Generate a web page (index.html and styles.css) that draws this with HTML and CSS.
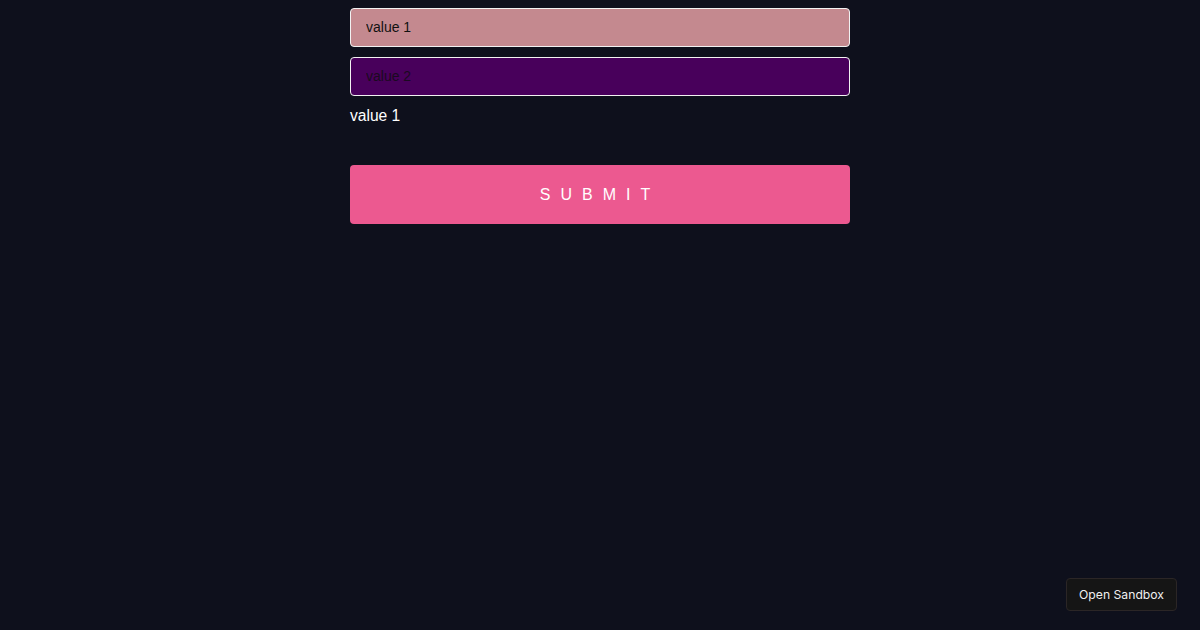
FILE: index.html
```html
<!DOCTYPE html>
<html>
<head>
<meta charset="utf-8">
<link rel="stylesheet" href="styles.css">
</head>
<body>
<form class="form">
  <input class="field field-one" value="value 1">
  <input class="field field-two" value="value 2">
  <p class="output">value 1</p>
  <button type="button" class="submit">submit</button>
</form>
<a class="sandbox">Open Sandbox</a>
</body>
</html>
```
FILE: styles.css
```css
html, body {
  margin: 0;
  background: #0e101c;
  height: 100%;
}
body {
  font-family: "Liberation Sans", Arial, sans-serif;
  padding-top: 8px;
  box-sizing: border-box;
}
.form {
  width: 500px;
  margin: 0 auto;
  display: flex;
  flex-direction: column;
}
.field {
  display: block;
  box-sizing: border-box;
  width: 100%;
  height: 39px;
  border-radius: 4px;
  border: 1px solid #f2f2f2;
  padding: 9px 15px 11px;
  margin: 0 0 10px 0;
  font-family: "Liberation Sans", Arial, sans-serif;
  font-size: 14px;
  color: #111;
  outline: none;
}
.field-one { background: #c4898f; }
.field-two { background: #48005b; color: #1a0a20; }
.output {
  margin: 0;
  padding-top: 1px;
  color: #fff;
  font-size: 15.6px;
  line-height: 18px;
  height: 18px;
}
.submit {
  margin-top: 40px;
  height: 59px;
  background: #ec5990;
  color: #fff;
  border: none;
  border-radius: 4px;
  text-transform: uppercase;
  font-family: "Liberation Sans", Arial, sans-serif;
  font-size: 16px;
  font-weight: 100;
  letter-spacing: 10px;
  padding: 0;
}
.sandbox {
  position: fixed;
  right: 23px;
  bottom: 19px;
  width: 111px;
  height: 33px;
  box-sizing: border-box;
  display: flex;
  align-items: center;
  justify-content: center;
  background: #151515;
  border: 1px solid #2b2626;
  border-radius: 4px;
  color: #f0f0f0;
  font-family: Inter, "Liberation Sans", sans-serif;
  font-size: 12.2px;
}
```
